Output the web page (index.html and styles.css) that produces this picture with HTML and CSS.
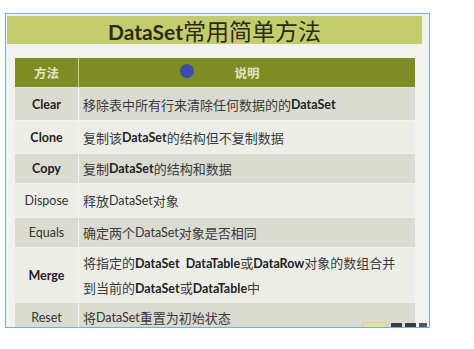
FILE: index.html
```html
<!DOCTYPE html>
<html>
<head>
<meta charset="utf-8">
<link rel="stylesheet" href="styles.css">
</head>
<body>
<div class="frame">
  <div class="title"><span class="lat">DataSet</span>常用简单方法</div>
  <div class="table">
    <div class="row head">
      <div class="c1">方法</div>
      <div class="c2 hc">说明<span class="dot"></span></div>
    </div>
    <div class="row dark h33">
      <div class="c1">Clear</div>
      <div class="c2">移除表中所有行来清除任何数据的的<b>DataSet</b></div>
    </div>
    <div class="row light h33">
      <div class="c1">Clone</div>
      <div class="c2">复制该<b>DataSet</b>的结构但不复制数据</div>
    </div>
    <div class="row dark h30">
      <div class="c1">Copy</div>
      <div class="c2">复制<b>DataSet</b>的结构和数据</div>
    </div>
    <div class="row light h34">
      <div class="c1 n">Dispose</div>
      <div class="c2">释放<span class="lr">DataSet</span>对象</div>
    </div>
    <div class="row dark h30">
      <div class="c1 n">Equals</div>
      <div class="c2">确定两个<span class="lr">DataSet</span>对象是否相同</div>
    </div>
    <div class="row light h55">
      <div class="c1">Merge</div>
      <div class="c2 multi">将指定的<b>DataSet&nbsp; DataTable</b>或<b>DataRow</b>对象的数组合并<br>到当前的<b>DataSet</b>或<b>DataTable</b>中</div>
    </div>
    <div class="row dark h30">
      <div class="c1 n">Reset</div>
      <div class="c2">将<span class="lr">DataSet</span>重置为初始状态</div>
    </div>
  </div>
  <div class="mark"><span class="pill"></span><span class="blk"></span><span class="blk"></span><span class="blk s"></span></div>
</div>
</body>
</html>
```
FILE: styles.css
```css
html, body {
  margin: 0;
  padding: 0;
  background: #ffffff;
}
body {
  font-family: "Noto Sans CJK SC", sans-serif;
}
.frame {
  position: relative;
  box-sizing: border-box;
  margin: 13px 0 0 5px;
  width: 425px;
  height: 315px;
  border: 1px solid #79acd9;
  background: #f2f3f0;
  overflow: hidden;
  padding: 2px 0 0 1px;
}
.title {
  width: 415px;
  height: 28px;
  background: #c4cd6d;
  text-align: center;
  font-size: 23px;
  line-height: 28px;
  color: #2b2b14;
  font-family: "Noto Sans CJK SC", sans-serif;
  font-weight: 400;
}
.title .lat {
  font-family: Lato, "Open Sans", sans-serif;
  font-weight: 700;
  font-size: 21px;
}
.table {
  margin: 14px 0 0 8px;
  width: 400px;
}
.row {
  display: flex;
  border-bottom: 1px solid #f4f4ef;
  box-sizing: border-box;
}
.c1 {
  width: 63px;
  flex: none;
  display: flex;
  align-items: center;
  justify-content: center;
  font-family: Lato, "Open Sans", sans-serif;
  font-weight: 700;
  font-size: 12.5px;
  color: #222;
  border-right: 1px solid #f4f4ef;
}
.c1.n {
  font-weight: 400;
  color: #333;
}
.c2 {
  flex: 1;
  display: flex;
  align-items: center;
  padding-left: 4px;
  font-size: 13px;
  color: #3a3a3a;
  font-family: "Noto Sans CJK SC", sans-serif;
  white-space: nowrap;
}
.c2 b, .c2 .lr {
  font-family: Lato, "Open Sans", sans-serif;
  font-weight: 700;
  font-size: 12.5px;
  color: #222;
}
.c2 .lr {
  font-weight: 400;
  color: #333;
}
.c2.multi {
  line-height: 24px;
  display: block;
  padding-top: 3px;
}
.head {
  height: 30px;
  background: #7f8b25;
  border-bottom: 1px solid #e8e9da;
}
.head .c1, .head .c2 {
  color: #e5e6c4;
  font-family: "Noto Sans CJK SC", serif;
  font-weight: 700;
  font-size: 12.5px;
  border-right-color: #c9cd99;
}
.head .hc {
  position: relative;
  justify-content: center;
  padding-left: 0;
}
.dot {
  position: absolute;
  left: 101px;
  top: 6px;
  width: 14px;
  height: 14px;
  border-radius: 50%;
  background: #3b4cae;
}
.dark { background: #dbdcd1; }
.light { background: #eeeee9; }
.h30 { height: 30px; }
.h33 { height: 33px; }
.h34 { height: 34px; }
.h55 { height: 55px; }
.mark {
  position: absolute;
  right: 2px;
  bottom: 0;
  display: flex;
  align-items: flex-end;
  gap: 3px;
  height: 5px;
}
.pill {
  width: 24px;
  height: 8px;
  border-radius: 4px;
  background: #e8e2a0;
  border: 1px solid #d9d27a;
  margin-bottom: -5px;
}
.blk {
  width: 11px;
  height: 4px;
  background: #3a3a3a;
}
.blk.s {
  width: 8px;
  background: #555;
}
```
